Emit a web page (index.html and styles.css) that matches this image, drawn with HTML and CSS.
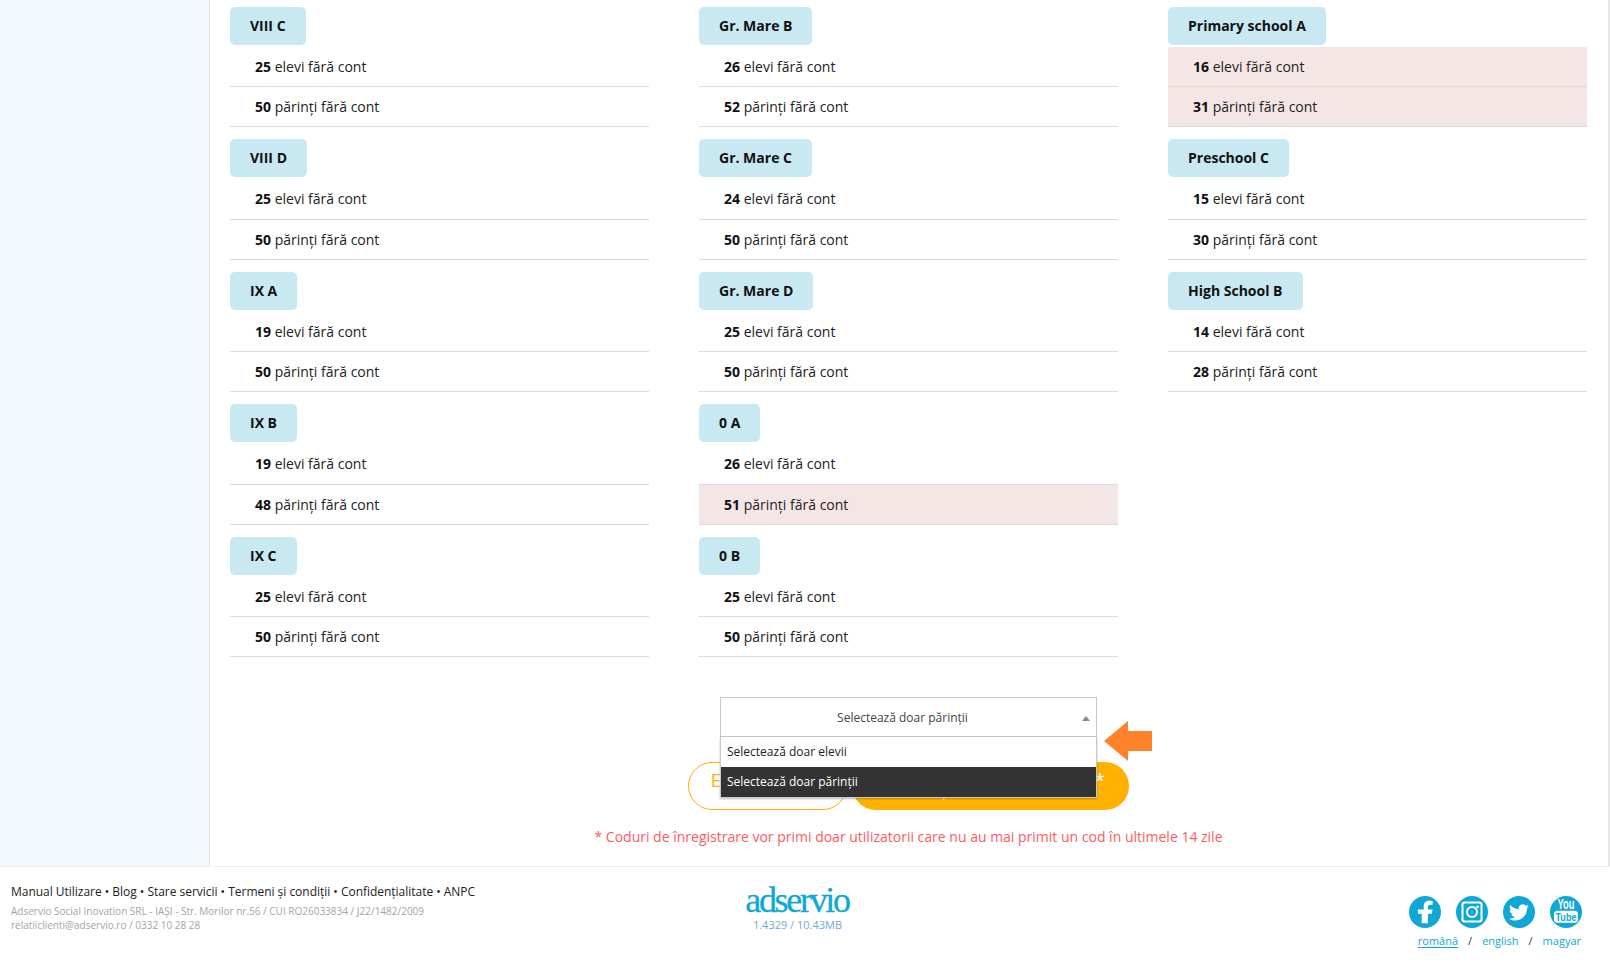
FILE: index.html
```html
<!DOCTYPE html>
<html lang="ro">
<head>
<meta charset="utf-8">
<title>Adservio</title>
<link rel="stylesheet" href="styles.css">
</head>
<body>
<div class="page">
  <aside class="side"></aside>
  <main class="main">
    <div class="grid">
      <div class="col">
        <section class="group"><h3 class="tag">VIII C</h3><div class="row"><b>25</b> elevi fără cont</div><div class="row"><b>50</b> părinţi fără cont</div></section>
        <section class="group"><h3 class="tag">VIII D</h3><div class="row"><b>25</b> elevi fără cont</div><div class="row"><b>50</b> părinţi fără cont</div></section>
        <section class="group"><h3 class="tag">IX A</h3><div class="row"><b>19</b> elevi fără cont</div><div class="row"><b>50</b> părinţi fără cont</div></section>
        <section class="group"><h3 class="tag">IX B</h3><div class="row"><b>19</b> elevi fără cont</div><div class="row"><b>48</b> părinţi fără cont</div></section>
        <section class="group"><h3 class="tag">IX C</h3><div class="row"><b>25</b> elevi fără cont</div><div class="row"><b>50</b> părinţi fără cont</div></section>
      </div>
      <div class="col">
        <section class="group"><h3 class="tag">Gr. Mare B</h3><div class="row"><b>26</b> elevi fără cont</div><div class="row"><b>52</b> părinţi fără cont</div></section>
        <section class="group"><h3 class="tag">Gr. Mare C</h3><div class="row"><b>24</b> elevi fără cont</div><div class="row"><b>50</b> părinţi fără cont</div></section>
        <section class="group"><h3 class="tag">Gr. Mare D</h3><div class="row"><b>25</b> elevi fără cont</div><div class="row"><b>50</b> părinţi fără cont</div></section>
        <section class="group"><h3 class="tag">0 A</h3><div class="row"><b>26</b> elevi fără cont</div><div class="row warn"><b>51</b> părinţi fără cont</div></section>
        <section class="group"><h3 class="tag">0 B</h3><div class="row"><b>25</b> elevi fără cont</div><div class="row"><b>50</b> părinţi fără cont</div></section>
      </div>
      <div class="col">
        <section class="group"><h3 class="tag">Primary school A</h3><div class="row warn"><b>16</b> elevi fără cont</div><div class="row warn"><b>31</b> părinţi fără cont</div></section>
        <section class="group"><h3 class="tag">Preschool C</h3><div class="row"><b>15</b> elevi fără cont</div><div class="row"><b>30</b> părinţi fără cont</div></section>
        <section class="group"><h3 class="tag">High School B</h3><div class="row"><b>14</b> elevi fără cont</div><div class="row"><b>28</b> părinţi fără cont</div></section>
      </div>
    </div>

    <div class="actions">
      <div class="select-wrap">
        <div class="select">Selectează doar părinţii<span class="caret"></span></div>
        <ul class="menu">
          <li class="opt">Selectează doar elevii</li>
          <li class="opt active">Selectează doar părinţii</li>
        </ul>
        <svg class="pointer" width="48" height="40" viewBox="0 0 48 40"><path d="M24 0V10H48V30H24V40L0 20Z" fill="#ff8229"/></svg>
      </div>
      <div class="buttons">
        <a class="btn ghost">Exportă date</a>
        <a class="btn solid">Generează coduri de acces*<span class="sub">pentru utilizatorii</span></a>
      </div>
      <p class="note">* Coduri de înregistrare vor primi doar utilizatorii care nu au mai primit un cod în ultimele 14 zile</p>
    </div>
  </main>
</div>
<footer class="footer">
  <div class="foot-left">
    <div class="links">Manual Utilizare • Blog • Stare servicii • Termeni şi condiţii • Confidenţialitate • ANPC</div>
    <div class="legal">Adservio Social Inovation SRL - IAŞI - Str. Morilor nr.56 / CUI RO26033834 / J22/1482/2009<br>relatiiclienti@adservio.ro / 0332 10 28 28</div>
  </div>
  <div class="foot-mid">
    <div class="logo">adservio</div>
    <div class="version">1.4329 / 10.43MB</div>
  </div>
  <div class="foot-right">
    <div class="social">
      <svg class="ico" viewBox="0 0 32 32"><circle cx="16" cy="16" r="16" fill="#0ea7d6"/><path d="M19 27.3V17.7h3.9l.6-4.3h-4.5v-2.6c0-1.3.4-2 2.2-2h2.4V5c-.5-.1-1.8-.2-3.3-.2-3.4 0-5.6 2-5.6 5.7v2.9H8.9v4.3h3.8v9.6z" fill="#fff"/></svg>
      <svg class="ico" viewBox="0 0 32 32"><circle cx="16" cy="16" r="16" fill="#0ea7d6"/><rect x="6.5" y="6.5" width="19" height="19" rx="2" fill="none" stroke="#fff" stroke-width="2"/><circle cx="16" cy="16" r="5" fill="none" stroke="#fff" stroke-width="2"/><circle cx="21.6" cy="10.8" r="1.4" fill="#fff"/></svg>
      <svg class="ico" viewBox="0 0 32 32"><circle cx="16" cy="16" r="16" fill="#0ea7d6"/><g transform="translate(6 6.5) scale(.83)"><path d="M23.953 4.57a10 10 0 01-2.825.775 4.958 4.958 0 002.163-2.723c-.951.555-2.005.959-3.127 1.184a4.92 4.92 0 00-8.384 4.482C7.69 8.095 4.067 6.13 1.64 3.162a4.822 4.822 0 00-.666 2.475c0 1.71.87 3.213 2.188 4.096a4.904 4.904 0 01-2.228-.616v.06a4.923 4.923 0 003.946 4.827 4.996 4.996 0 01-2.212.085 4.936 4.936 0 004.604 3.417 9.867 9.867 0 01-6.102 2.105c-.39 0-.779-.023-1.17-.067a13.995 13.995 0 007.557 2.209c9.053 0 13.998-7.496 13.998-13.985 0-.21 0-.42-.015-.63A9.935 9.935 0 0024 4.59z" fill="#fff"/></g></svg>
      <svg class="ico" viewBox="0 0 32 32"><circle cx="16" cy="16" r="16" fill="#0ea7d6"/><text x="7.5" y="13.3" class="yt" textLength="17" lengthAdjust="spacingAndGlyphs" fill="#fff">You</text><rect x="4" y="14.7" width="24" height="12" rx="3.5" fill="#fff"/><text x="5.5" y="25" class="yt small" textLength="21" lengthAdjust="spacingAndGlyphs" fill="#0ea7d6">Tube</text></svg>
    </div>
    <div class="langs"><a class="lang on">română</a><span class="sep">/</span><a class="lang">english</a><span class="sep">/</span><a class="lang">magyar</a></div>
  </div>
</footer>
</body>
</html>
```
FILE: styles.css
```css
* { box-sizing: border-box; }
html, body { margin: 0; padding: 0; height: 969px; overflow: hidden; background: #fff; }
body { font-family: "Open Sans", "Noto Sans", sans-serif; font-size: 14px; color: #222; display: flex; flex-direction: column; }

.page { display: flex; height: 866px; border-right: 2px solid #e6e6ee; }
.side { width: 210px; flex: none; background: #f4f8ff; border-right: 1px solid #dcdfe6; }
.main { flex: 1; padding: 7px 21px 0 20px; min-width: 0; }

.grid { display: grid; grid-template-columns: repeat(3, 419px); column-gap: 50px; height: 651px; }
.group { margin-bottom: 12.1px; }
.tag { display: table; margin: 0 0 2px; height: 38px; line-height: 37px; padding: 0 20px; background: #c8e8f2; border-radius: 5px; font-size: 14px; font-weight: 700; color: #111; }
.row { height: 40.2px; line-height: 39px; padding-left: 25px; border-bottom: 1px solid #dcdcdc; color: #222; }
.row b { color: #111; }
.warn { background: #f5e6e6; }

.actions { display: flex; flex-direction: column; align-items: center; padding-top: 39px; }
.select-wrap { position: relative; width: 377px; height: 40px; }
.select { height: 40px; border: 1px solid #c8c8c8; background: #fff; text-align: center; line-height: 40px; font-size: 12px; color: #444; padding-right: 12px; position: relative; }
.caret { position: absolute; right: 6px; top: 18px; width: 0; height: 0; border-left: 4px solid transparent; border-right: 4px solid transparent; border-bottom: 5px solid #888; }
.menu { position: absolute; left: 0; right: 0; top: 40px; margin: 0; padding: 0; list-style: none; background: #fff; border: 1px solid #c8c8c8; border-top: 0; box-shadow: 0 1px 2px rgba(0,0,0,.25); z-index: 2; }
.opt { height: 30px; line-height: 29px; padding-left: 6px; font-size: 12px; color: #222; }
.opt.active { background: #333; color: #fff; }
.pointer { position: absolute; left: 384px; top: 24px; }

.buttons { display: flex; gap: 5px; margin-top: 25px; width: 441px; }
.btn { height: 48px; border-radius: 24px; text-align: center; }
.ghost { width: 159px; border: 1px solid #ffb000; color: #ffb000; background: #fff; font-size: 18px; line-height: 24px; padding: 5px 6px 0 0; }
.solid { width: 277px; background: #ffb000; color: #fff; font-size: 18px; line-height: 22px; padding: 7px 6px 0 0; }
.sub { display: block; font-size: 12px; line-height: 10px; margin: -3px -6px 0 0; }
.note { margin: 17px 0 0; font-size: 14px; line-height: 20px; color: #ff5a60; }

.footer { height: 103px; display: flex; background: #fff; border-top: 1px solid #eceef2; }
.foot-left { width: 744px; padding: 16px 0 0 11px; flex: none; }
.links { font-size: 12px; line-height: 18px; color: #222; letter-spacing: -.025px; }
.legal { font-size: 10px; line-height: 14px; color: #a4a4a4; margin-top: 3px; }
.foot-mid { width: 106px; flex: none; text-align: center; padding-top: 17px; }
.logo { font-family: "Liberation Serif", serif; font-size: 36px; line-height: 32px; letter-spacing: -2.3px; color: #0ea7d6; -webkit-text-stroke: .3px #0ea7d6; white-space: nowrap; }
.version { font-size: 11px; line-height: 14px; color: #6fa8dc; margin: 2px 0 0 1px; }
.foot-right { margin-left: auto; width: 200px; padding-top: 29px; display: flex; flex-direction: column; align-items: flex-end; padding-right: 28px; }
.social { display: flex; gap: 15px; }
.ico { width: 32px; height: 32px; display: block; }
.yt { font-family: "Liberation Sans", sans-serif; font-size: 14px; font-weight: 700; }
.yt.small { font-size: 11px; }
.langs { display: flex; font-size: 11px; line-height: 14px; margin-top: 6px; margin-right: 1px; color: #0ea7d6; }
.lang.on { text-decoration: underline; text-underline-offset: 2px; }
.sep { margin: 0 10px; color: #333; }
```
